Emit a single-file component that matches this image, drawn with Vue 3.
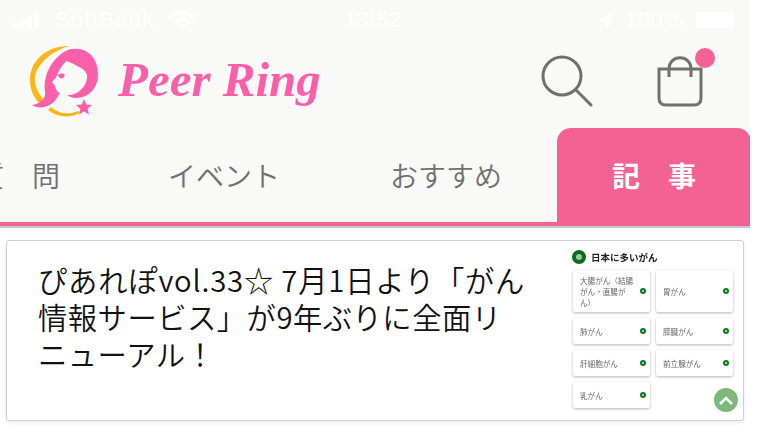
<script setup>
const tabs = [
  { label: '質　問' },
  { label: 'イベント' },
  { label: 'おすすめ' },
  { label: '記　事', active: true },
]

const titleLines = ['ぴあれぽvol.33☆ 7月1日より「がん', '情報サービス」が9年ぶりに全面リ', 'ニューアル！']

const cancers = ['大腸がん（結腸\nがん・直腸が\nん）', '胃がん', '肺がん', '膵臓がん', '肝細胞がん', '前立腺がん', '乳がん']
</script>

<template>
  <div class="page">
    <div class="status">
      <div class="status-left">
        <svg class="signal" width="33" height="18" viewBox="0 0 33 18">
          <rect x="0" y="12" width="5" height="6" rx="1" />
          <rect x="7" y="9" width="5" height="9" rx="1" />
          <rect x="14" y="5" width="5" height="13" rx="1" />
          <rect x="21" y="1" width="5" height="17" rx="1" />
        </svg>
        <span class="carrier">SoftBank</span>
        <svg width="28" height="20" viewBox="0 0 28 20">
          <path d="M0 7 C8 -2 20 -2 28 7 L25 10 C18 3 10 3 3 10 Z" />
          <path d="M5 12 C10 6 18 6 23 12 L20 15 C16 11 12 11 8 15 Z" />
          <path d="M10 17 C12 14 16 14 18 17 L14 20 Z" />
        </svg>
      </div>
      <span class="time">13:52</span>
      <div class="status-right">
        <svg width="17" height="17" viewBox="0 0 17 17">
          <path d="M17 0 L0 8 L8 9 L9 17 Z" />
        </svg>
        <span class="percent">100%</span>
        <div class="battery"><div class="battery-fill"></div></div>
      </div>
    </div>

    <header class="head">
      <div class="brand">
        <svg class="logo" width="80" height="80" viewBox="0 0 80 80">
          <path fill="#fdb515" d="M46 4 C24 3 6 18 6 38 C6 48 10 56 16 62 L20 58 C13 50 10 42 11 34 C14 20 30 8 46 4 Z" />
          <path fill="#fdb515" d="M24 68 C33 75 44 77 56 71 L54 69 C44 73 35 72 27 65 Z" />
          <path
            fill="#fb5fa9"
            d="M37 12 C45 5 58 5 66 12 C75 20 76 36 71 45 C65 56 50 59 43 53 C52 54 62 46 63 36 C64 30 58 26 53 24 C50 22 46 20 42 19 C38 24 35 28 34 31 C33 35 30 38 28 40 L31 44 L32 47 C33 50 35 51 36 50 C34 56 28 64 20 65 C15 66 11 65 8 63 C15 62 22 58 21 50 C19 38 24 22 37 12 Z"
          />
          <path fill="#fb5fa9" d="M34 33 C36 31 39 31 41 33 L39 36 C37 37 35 36 34 33 Z" />
          <path fill="#fb5fa9" d="M60 57 L62.300 62.500 L68 63 L63.700 66.800 L65 72.500 L60 69.500 L55 72.500 L56.300 66.800 L52 63 L57.700 62.500 Z" />
        </svg>
        <span class="wordmark">Peer Ring</span>
      </div>
      <div class="actions">
        <svg width="56" height="56" viewBox="0 0 56 56" fill="none" stroke="#707070" stroke-width="3">
          <circle cx="23" cy="23" r="19" />
          <path d="M37 37 L52 52" stroke-linecap="round" />
        </svg>
        <div class="bag">
          <svg width="46" height="52" viewBox="0 0 46 52" fill="none" stroke="#707070" stroke-width="3">
            <path d="M2 14 H44 V43 Q44 50 37 50 H9 Q2 50 2 43 Z" />
            <path d="M12 22 V14 C12 -1 34 -1 34 14 V22" />
          </svg>
          <span class="bag-dot"></span>
        </div>
      </div>
    </header>

    <nav class="tabs">
      <a v-for="tab in tabs" :key="tab.label" class="tab" :class="{ active: tab.active }">{{ tab.label }}</a>
    </nav>

    <article class="card">
      <div class="title">
        <p v-for="line in titleLines" :key="line">{{ line }}</p>
      </div>
      <div class="thumb">
        <div class="thumb-head">
          <span class="pin"><i></i></span>
          <b>日本に多いがん</b>
        </div>
        <div class="thumb-grid">
          <div v-for="name in cancers" :key="name" class="cell">
            <span>{{ name }}</span>
            <i class="cell-dot"></i>
          </div>
        </div>
      </div>
      <div class="to-top">
        <svg width="14" height="9" viewBox="0 0 14 9" fill="none" stroke="#fff" stroke-width="2.500">
          <path d="M1 8 L7 2 L13 8" />
        </svg>
      </div>
    </article>
  </div>
</template>

<style scoped>
.page {
  width: 750px;
  height: 432px;
  overflow: hidden;
  font-family: "Noto Sans CJK JP", "Liberation Sans", sans-serif;
}

.status {
  height: 40px;
  background: #f9f9f7;
  color: #fff;
  font-family: "Liberation Sans", sans-serif;
  font-size: 22px;
  display: flex;
  align-items: center;
  padding: 0 15px 0 13px;
  box-sizing: border-box;
}
.status svg {
  fill: #fff;
}
.status-left {
  width: 331px;
  display: flex;
  align-items: center;
  gap: 9px;
}
.carrier {
  letter-spacing: 1.300px;
  margin-right: 4px;
}
.time {
  letter-spacing: 0.600px;
}
.status-right {
  margin-left: auto;
  display: flex;
  align-items: center;
  gap: 10px;
}
.percent {
  width: 60px;
  letter-spacing: 0.500px;
}
.battery {
  width: 40px;
  height: 18px;
  padding: 1px;
  box-sizing: border-box;
}
.battery-fill {
  height: 100%;
  width: 100%;
  background: #fff;
  border-radius: 2px;
}

.head {
  height: 88px;
  background: #f9f9f7;
  display: flex;
  align-items: flex-start;
  justify-content: space-between;
  padding-left: 24px;
}
.brand {
  display: flex;
  align-items: center;
  margin-top: 2px;
}
.logo {
  filter: blur(0.3px);
}
.wordmark {
  margin: 0 0 6px 14px;
  font-family: "Liberation Serif", serif;
  font-style: italic;
  font-weight: 700;
  font-size: 49px;
  line-height: 1;
  color: #fb5fa9;
  white-space: nowrap;
}
.actions {
  display: flex;
  align-items: flex-start;
  gap: 62px;
  padding: 13px 47px 0 0;
}
.bag {
  position: relative;
  margin-top: 2px;
}
.bag-dot {
  position: absolute;
  top: -7px;
  right: -12px;
  width: 20px;
  height: 20px;
  border-radius: 50%;
  background: #f36293;
}

.tabs {
  height: 98px;
  box-sizing: border-box;
  background: #f9f9f7;
  border-bottom: 4px solid #f36293;
  box-shadow: 0 2px 0 #c8c8c8;
  display: flex;
}
.tab {
  flex: none;
  padding: 0 55px;
  font-size: 28px;
  font-weight: 350;
  line-height: 94px;
  color: #707070;
  white-space: nowrap;
}
.tab:first-child {
  margin-left: -79px;
  padding-right: 53px;
}
.tab.active {
  background: #f36293;
  color: #fff;
  font-weight: 700;
  border-radius: 14px 14px 0 0;
  height: 98px;
}

.card {
  position: relative;
  margin: 14px 6px 0;
  height: 181px;
  box-sizing: border-box;
  border: 1px solid #cfcfcf;
  border-radius: 3px;
  background: #fff;
  box-shadow: 0 2px 4px rgba(0, 0, 0, 0.08);
  display: flex;
  justify-content: space-between;
  padding: 0 10px 0 31px;
}
.title {
  margin-top: 20px;
  font-size: 29.300px;
  font-weight: 350;
  line-height: 37px;
  letter-spacing: 0.500px;
  color: #111;
  white-space: nowrap;
}
.title p {
  margin: 0;
}
.title p:first-child {
  letter-spacing: 0.800px;
}
.thumb {
  width: 160px;
  padding-top: 8px;
  filter: blur(0.3px);
}
.thumb-head {
  height: 16px;
  display: flex;
  align-items: center;
  gap: 5px;
  margin-left: -1px;
  font-size: 9.500px;
  color: #222;
}
.pin {
  width: 14px;
  height: 14px;
  border-radius: 50%;
  background: #0a6d1a;
  display: flex;
  align-items: center;
  justify-content: center;
}
.pin i {
  width: 6px;
  height: 6px;
  border-radius: 50%;
  background: #9fc8a5;
}
.thumb-grid {
  margin-top: 5px;
  display: grid;
  grid-template-columns: 77px 77px;
  grid-template-rows: 42px 26px 26px 26px;
  gap: 6px;
}
.cell {
  display: flex;
  align-items: center;
  justify-content: space-between;
  padding: 0 4px 0 7px;
  background: #fff;
  border-radius: 2px;
  box-shadow: 0 1px 3px rgba(0, 0, 0, 0.3);
  font-size: 7.600px;
  line-height: 11px;
  color: #666;
}
.cell span {
  width: 54px;
  white-space: pre-line;
}
.cell-dot {
  flex: none;
  width: 6px;
  height: 6px;
  border-radius: 50%;
  background: radial-gradient(circle, #9fc8a5 0 1px, #0a7d14 1.500px);
}
.to-top {
  position: absolute;
  right: 5px;
  bottom: 8px;
  width: 24px;
  height: 24px;
  border-radius: 50%;
  background: #7db77a;
  display: flex;
  align-items: center;
  justify-content: center;
}
</style>
